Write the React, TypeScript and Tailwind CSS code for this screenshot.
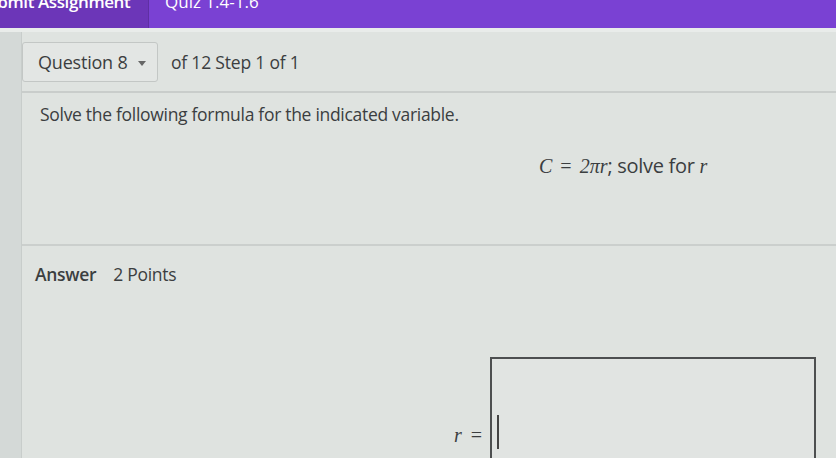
import React from "react";

export default function App() {
  const sans = { fontFamily: '"Open Sans", "Noto Sans", sans-serif' } as React.CSSProperties;
  const serif = { fontFamily: '"Liberation Serif", serif' } as React.CSSProperties;
  return (
    <div className="w-[836px] h-[458px] overflow-hidden flex flex-col bg-[#dfe3e0] text-[#3b3e40]" style={sans}>
      {/* Header */}
      <div className="h-[28px] shrink-0 flex bg-[#7a41d3] text-white overflow-hidden">
        <div className="w-[149px] shrink-0 bg-[#6c36b8] border-r border-[#5f2fa3] overflow-hidden">
          <div className="-ml-[22px] -mt-[11px] text-[17px] whitespace-nowrap font-semibold tracking-[-0.4px]">Submit Assignment</div>
        </div>
        <div className="pl-[16px] -mt-[11px] text-[17px] whitespace-nowrap">Quiz 1.4-1.6</div>
      </div>
      <div className="h-[4px] shrink-0 bg-[#e9ecea]" />
      <div className="flex-1 flex min-h-0">
        <div className="w-[22px] shrink-0 bg-[#d4d9d7] border-r border-[#c8cdcb]" />
        <div className="flex-1 flex flex-col min-w-0">
          {/* Question nav */}
          <div className="h-[61px] shrink-0 flex items-start pt-[10px] border-b-2 border-[#c9cdcb]">
            <div className="w-[136px] h-[40px] border border-[#c3c7c5] rounded-[3px] bg-[#e3e6e4] flex items-center pl-[15px] text-[18px] tracking-[-0.2px]">
              <span>Question 8</span>
              <svg width="8" height="5" viewBox="0 0 8 5" className="ml-[10px] mt-[2px]">
                <path d="M0 0 L8 0 L4 5 Z" fill="#666" />
              </svg>
            </div>
            <div className="ml-[13px] h-[40px] flex items-center text-[17.5px] tracking-[-0.2px]">of 12 Step 1 of 1</div>
          </div>
          {/* Question */}
          <div className="h-[153px] shrink-0 border-b-2 border-[#cbcfcd] flex flex-col">
            <div className="pl-[18px] pt-[8px] text-[17.5px] tracking-[-0.3px]">Solve the following formula for the indicated variable.</div>
            <div className="mt-[24px] pl-[517px] text-[20px] whitespace-nowrap flex items-baseline">
              <span className="italic" style={serif}>C</span>
              <span className="mx-[8px]" style={serif}>=</span>
              <span className="italic" style={serif}>2πr</span>
              <span className="tracking-[-0.3px]">; solve for </span>
              <span className="italic ml-[5px]" style={serif}>r</span>
            </div>
          </div>
          {/* Answer */}
          <div className="flex-1 flex flex-col">
            <div className="pl-[13px] pt-[15px] flex items-baseline text-[17.5px]">
              <span className="font-semibold tracking-[-0.3px]">Answer</span>
              <span className="ml-[17px] tracking-[-0.3px]">2 Points</span>
            </div>
            <div className="mt-[70px] flex justify-end pr-[20px]">
              <div className="mt-[63px] mr-[8px] text-[20px] whitespace-nowrap flex items-baseline" style={serif}>
                <span className="italic">r</span>
                <span className="ml-[9px]">=</span>
              </div>
              <div className="w-[326px] h-[130px] border-2 border-[#4d4f50] bg-[#e1e4e2] relative">
                <div className="absolute left-[5px] top-[56px] w-[2px] h-[34px] bg-[#444]" />
              </div>
            </div>
          </div>
        </div>
      </div>
    </div>
  );
}
